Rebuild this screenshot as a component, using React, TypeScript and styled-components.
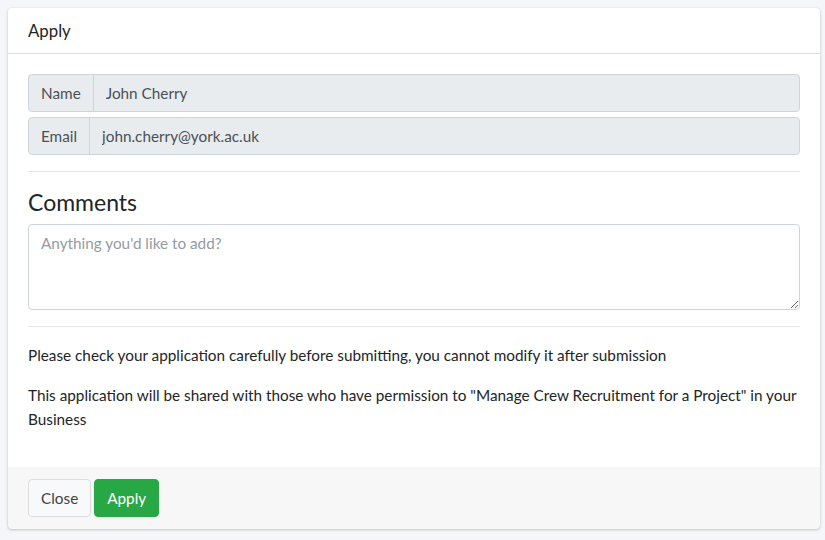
import * as React from 'react';
import styled, { createGlobalStyle } from 'styled-components';

const GlobalStyle = createGlobalStyle`
  html, body {
    margin: 0;
    padding: 0;
    background: #f4f6f9;
  }
  body {
    font-family: Lato, "Noto Sans", sans-serif;
    font-size: 15.3px;
    line-height: 24px;
    color: #212529;
  }
  * {
    box-sizing: border-box;
  }
`;

const Page = styled.div`
  padding: 8px 5px 8px 8px;
`;

const Card = styled.div`
  width: 812px;
  background: #ffffff;
  border-radius: 4px;
  box-shadow: 0 0 1px rgba(0, 0, 0, 0.125), 0 1px 3px rgba(0, 0, 0, 0.2);
  overflow: hidden;
`;

const CardHeader = styled.div`
  padding: 12px 20px;
  border-bottom: 1px solid rgba(0, 0, 0, 0.125);
`;

const CardTitle = styled.h3`
  margin: 0;
  font-size: 16.8px;
  font-weight: 400;
  line-height: 21px;
`;

const CardBody = styled.div`
  padding: 20px;
`;

const InputGroup = styled.div`
  display: flex;
  height: 38px;
  margin-bottom: 5px;
`;

const Addon = styled.span`
  display: flex;
  align-items: center;
  padding: 0 12px;
  background: #e9ecef;
  border: 1px solid #ced4da;
  border-radius: 4px 0 0 4px;
  color: #495057;
  white-space: nowrap;
`;

const ReadOnlyInput = styled.input`
  flex: 1;
  min-width: 0;
  margin-left: -1px;
  padding: 6px 12px;
  font: inherit;
  color: #495057;
  background: #e9ecef;
  border: 1px solid #ced4da;
  border-radius: 0 4px 4px 0;
  outline: none;
`;

const Divider = styled.hr`
  margin: 16px 0;
  border: 0;
  border-top: 1px solid rgba(0, 0, 0, 0.1);
`;

const SectionTitle = styled.h4`
  margin: 0 0 8px;
  font-size: 23px;
  font-weight: 400;
  line-height: 28px;
`;

const CommentBox = styled.textarea`
  display: block;
  width: 100%;
  height: 86px;
  padding: 6px 12px;
  font: inherit;
  color: #495057;
  background: #ffffff;
  border: 1px solid #ced4da;
  border-radius: 4px;
  outline: none;
  resize: vertical;

  &::placeholder {
    color: #939ba2;
  }
`;

const Note = styled.p`
  margin: 0 0 16px;
`;

const CardFooter = styled.div`
  display: flex;
  gap: 3px;
  padding: 12px 20px;
  background: rgba(0, 0, 0, 0.03);
`;

const Button = styled.button<{ variant?: 'default' | 'success' }>`
  height: 38px;
  padding: 6px 12px;
  font: inherit;
  border-radius: 4px;
  border: 1px solid ${props => (props.variant === 'success' ? '#28a745' : '#dddddd')};
  background: ${props => (props.variant === 'success' ? '#28a745' : '#f8f9fa')};
  color: ${props => (props.variant === 'success' ? '#ffffff' : '#444444')};
  cursor: pointer;
`;

export default function App() {
  return (
    <>
      <GlobalStyle />
      <Page>
        <Card>
          <CardHeader>
            <CardTitle>Apply</CardTitle>
          </CardHeader>
          <CardBody>
            <InputGroup>
              <Addon>Name</Addon>
              <ReadOnlyInput value="John Cherry" disabled />
            </InputGroup>
            <InputGroup>
              <Addon>Email</Addon>
              <ReadOnlyInput value="john.cherry@york.ac.uk" disabled />
            </InputGroup>
            <Divider />
            <SectionTitle>Comments</SectionTitle>
            <CommentBox placeholder="Anything you'd like to add?" />
            <Divider />
            <Note>Please check your application carefully before submitting, you cannot modify it after submission</Note>
            <Note>
              This application will be shared with those who have permission to "Manage Crew Recruitment for a Project" in
              your Business
            </Note>
          </CardBody>
          <CardFooter>
            <Button>Close</Button>
            <Button variant="success">Apply</Button>
          </CardFooter>
        </Card>
      </Page>
    </>
  );
}
